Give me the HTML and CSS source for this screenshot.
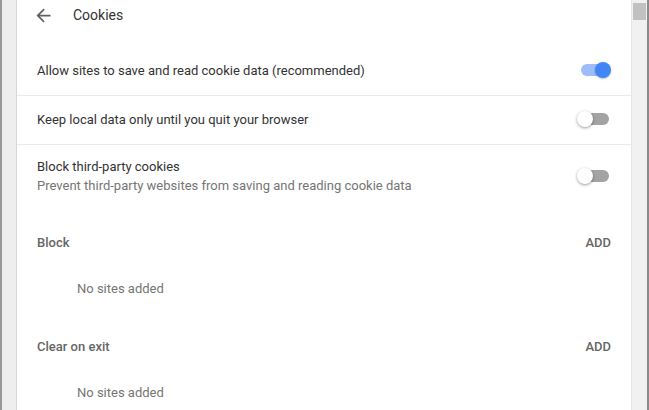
FILE: index.html
```html
<!DOCTYPE html>
<html>
<head>
<meta charset="utf-8">
<link rel="stylesheet" href="styles.css">
</head>
<body>
<div class="page">
  <div class="side"></div>
  <main class="card">
    <header class="head">
      <svg class="back" viewBox="0 0 24 24" width="21" height="21"><path d="M20 11H7.83l5.59-5.59L12 4l-8 8 8 8 1.41-1.41L7.83 13H20v-2z" fill="#5f6368"/></svg>
      <span class="title">Cookies</span>
    </header>
    <div class="row first">
      <div class="label">Allow sites to save and read cookie data (recommended)</div>
      <div class="toggle on"><span class="bar"></span><span class="knob"></span></div>
    </div>
    <div class="row">
      <div class="label">Keep local data only until you quit your browser</div>
      <div class="toggle"><span class="bar"></span><span class="knob"></span></div>
    </div>
    <div class="row tall">
      <div class="label">
        <div>Block third-party cookies</div>
        <div class="sub">Prevent third-party websites from saving and reading cookie data</div>
      </div>
      <div class="toggle"><span class="bar"></span><span class="knob"></span></div>
    </div>
    <section class="section">
      <div class="sec-head"><span>Block</span><span class="add">ADD</span></div>
      <div class="empty">No sites added</div>
    </section>
    <section class="section">
      <div class="sec-head"><span>Clear on exit</span><span class="add">ADD</span></div>
      <div class="empty">No sites added</div>
    </section>
  </main>
  <div class="scroll"><div class="thumb"></div></div>
</div>
</body>
</html>
```
FILE: styles.css
```css
html, body {
  margin: 0;
  padding: 0;
  overflow: hidden;
}
* {
  box-sizing: border-box;
}
body {
  font-family: Roboto, "Liberation Sans", Arial, sans-serif;
  font-size: 13px;
  color: #333;
}
.page {
  display: flex;
  width: 649px;
  height: 410px;
  background: #fff;
}
.side {
  width: 17px;
  flex: none;
  background: #eee;
  border-left: 2px solid #999;
  border-right: 1px solid #d6d6d6;
}
.card {
  flex: 1;
  min-width: 0;
  background: #fff;
  border-right: 1px solid #e6e6e6;
}
.head {
  height: 30px;
  display: flex;
  align-items: center;
  padding-left: 16px;
  margin-bottom: 16px;
}
.back {
  display: block;
  flex: none;
}
.title {
  margin-left: 19px;
  font-size: 14px;
  color: #333;
}
.row {
  height: 49px;
  display: flex;
  align-items: center;
  justify-content: space-between;
  padding: 0 20px 2px;
  border-top: 1px solid #ebebeb;
}
.row.first {
  border-top: none;
  padding-bottom: 1px;
}
.row.tall {
  height: 64px;
}
.sub {
  color: #757575;
  margin-top: 4px;
}
.toggle {
  position: relative;
  width: 34px;
  height: 16px;
  flex: none;
}
.toggle .bar {
  position: absolute;
  left: 4px;
  top: 2px;
  width: 28px;
  height: 12px;
  border-radius: 6px;
  background: #a3a3a3;
}
.toggle .knob {
  position: absolute;
  left: 0;
  top: 0;
  width: 16px;
  height: 16px;
  border-radius: 50%;
  background: #fff;
  box-shadow: 0 1px 3px rgba(0, 0, 0, 0.4);
}
.toggle.on .bar {
  background: #9cbdf7;
}
.toggle.on .knob {
  left: 18px;
  background: #4285f4;
  box-shadow: 0 1px 2px rgba(0, 0, 0, 0.25);
}
.section {
  padding-top: 10px;
}
.sec-head {
  height: 48px;
  display: flex;
  align-items: center;
  justify-content: space-between;
  padding: 0 20px;
  color: #666;
  font-weight: 500;
}
.add {
  color: #666;
}
.empty {
  height: 46px;
  display: flex;
  align-items: center;
  padding: 0 0 2px 60px;
  color: #757575;
}
.scroll {
  width: 17px;
  flex: none;
  background: #f1f1f1;
  border-right: 2px solid #8a8a8a;
  padding-top: 3px;
}
.thumb {
  margin-left: 1px;
  width: 13px;
  height: 17px;
  background: #c1c1c1;
}
```
